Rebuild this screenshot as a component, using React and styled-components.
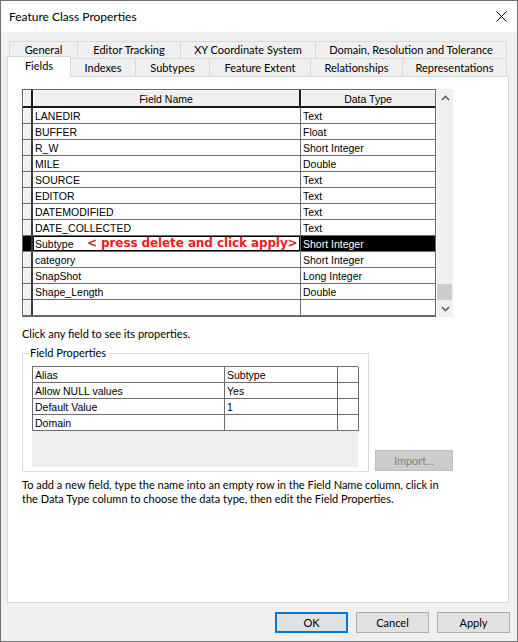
import React from "react";
import styled, { createGlobalStyle } from "styled-components";

const GlobalStyle = createGlobalStyle`
  html, body {
    margin: 0;
    padding: 0;
    background: #f0f0f0;
  }
  * {
    box-sizing: border-box;
  }
`;

const UI_FONT = `"Segoe UI", Lato, "Noto Sans", sans-serif`;
const GRID_FONT = `"Liberation Sans", Arial, sans-serif`;

const Window = styled.div`
  width: 518px;
  height: 642px;
  border: 1px solid #707070;
  background: #f0f0f0;
  display: flex;
  flex-direction: column;
  font-family: ${UI_FONT};
  font-size: 11px;
  color: #000;
`;

const TitleBar = styled.div`
  height: 31px;
  background: #fff;
  display: flex;
  align-items: center;
  justify-content: space-between;
  padding: 0 8px 1px 8px;
  font-size: 12px;
`;

const CloseButton = styled.div`
  width: 12px;
  height: 12px;
  margin-right: 2px;
  display: flex;
  align-items: center;
  justify-content: center;
`;

const Body = styled.div`
  flex: 1;
  display: flex;
  flex-direction: column;
  padding: 9px 8px 0 6px;
`;

const TabStrip = styled.div`
  margin-left: 2px;
  width: 498px;
  display: flex;
  flex-direction: column;
`;

const TabRow = styled.div`
  display: flex;
  align-items: flex-end;
  height: ${(p) => p.$h}px;
`;

const Tab = styled.div`
  flex: 0 0 ${(p) => p.$w}px;
  height: 100%;
  display: flex;
  align-items: center;
  justify-content: center;
  background: #f0f0f0;
  border-top: 1px solid #d9d9d9;
  border-left: 1px solid #d9d9d9;
  border-right: ${(p) => (p.$last ? "1px solid #d9d9d9" : "none")};
  white-space: nowrap;
  padding-bottom: 1px;
`;

const ActiveTab = styled.div`
  position: relative;
  z-index: 1;
  flex: 0 0 ${(p) => p.$w + 3}px;
  height: 21px;
  margin: -2px -1px -1px -2px;
  display: flex;
  align-items: center;
  justify-content: center;
  background: #fff;
  border: 1px solid #d9d9d9;
  border-bottom: none;
  padding-bottom: 3px;
`;

const Panel = styled.div`
  width: 502px;
  height: 527px;
  background: #fff;
  border: 1px solid #d9d9d9;
  padding: 12px 0 0 14px;
  display: flex;
  flex-direction: column;
`;

const GridRow = styled.div`
  display: flex;
  height: 228px;
`;

const DataGrid = styled.div`
  width: 414px;
  height: 228px;
  border: 1px solid #646464;
  display: grid;
  grid-template-columns: 10px 268px 134px;
  grid-auto-rows: 16px;
  grid-template-rows: 18px;
  font-family: ${GRID_FONT};
  font-size: 10.5px;
  overflow: hidden;
`;

const HeaderCell = styled.div`
  background: #f0f0f0;
  border-bottom: 2px solid #1a1a1a;
  border-right: ${(p) => (p.$last ? "none" : "2px solid #1a1a1a")};
  box-shadow: inset 1px 1px 0 #fff;
  display: flex;
  align-items: center;
  justify-content: center;
  padding-top: 1px;
`;

const SelectorCell = styled.div`
  background: ${(p) => (p.$active ? "#000" : "#f0f0f0")};
  border-right: 2px solid #3a3a3a;
  border-bottom: 1px solid #6d6d6d;
  box-shadow: ${(p) => (p.$active ? "none" : "inset 1px 1px 0 #fff")};
`;

const Cell = styled.div`
  position: relative;
  background: ${(p) => (p.$dark ? "#000" : "#fff")};
  color: ${(p) => (p.$dark ? "#fff" : "#000")};
  border-right: ${(p) => (p.$last ? "none" : "1px solid #6d6d6d")};
  border-bottom: 1px solid #6d6d6d;
  box-shadow: ${(p) => (p.$editing ? "inset 0 0 0 1px #000" : "none")};
  display: flex;
  align-items: center;
  padding-left: 2px;
  white-space: nowrap;
`;

const Annotation = styled.span`
  position: absolute;
  left: 54px;
  top: -2px;
  color: #ee1b24;
  font-family: "DejaVu Sans", Verdana, sans-serif;
  font-weight: bold;
  font-size: 12px;
  line-height: 18px;
  letter-spacing: -0.1px;
`;

const ScrollBar = styled.div`
  width: 16px;
  height: 228px;
  margin-left: 1px;
  background: #f0f0f0;
  display: flex;
  flex-direction: column;
`;

const ScrollArrow = styled.div`
  height: 17px;
  display: flex;
  align-items: center;
  justify-content: center;
`;

const ScrollTrack = styled.div`
  flex: 1;
  display: flex;
  flex-direction: column;
  justify-content: flex-end;
`;

const ScrollThumb = styled.div`
  height: 16px;
  margin: 0 1px 0 0;
  background: #cdcdcd;
`;

const Note = styled.div`
  line-height: 14px;
  margin-top: ${(p) => p.$mt}px;
  white-space: nowrap;
`;

const PropsRow = styled.div`
  display: flex;
  align-items: flex-end;
  margin-top: 5px;
`;

const GroupBox = styled.fieldset`
  width: 347px;
  margin: 0;
  border: 1px solid #dcdcdc;
  padding: 6px 0 4px 9px;
`;

const GroupLabel = styled.legend`
  padding: 0 1px;
  margin-left: -3px;
  line-height: 14px;
`;

const PropControl = styled.div`
  width: 326px;
  height: 101px;
  background: #efefef;
`;

const PropTable = styled.div`
  display: grid;
  grid-template-columns: 192px 113px 21px;
  grid-auto-rows: 16px;
  background: #fff;
  border-top: 1px solid #6d6d6d;
  border-left: 1px solid #6d6d6d;
  font-family: ${GRID_FONT};
  font-size: 10.5px;
`;

const PropCell = styled.div`
  border-right: 1px solid #6d6d6d;
  border-bottom: 1px solid #6d6d6d;
  display: flex;
  align-items: center;
  padding-left: 2px;
  white-space: nowrap;
`;

const ImportButton = styled.div`
  width: 78px;
  height: 21px;
  margin: 0 0 1px 6px;
  background: #cccccc;
  border: 1px solid #bfbfbf;
  color: #838383;
  display: flex;
  align-items: center;
  justify-content: center;
`;

const ButtonRow = styled.div`
  display: flex;
  justify-content: flex-end;
  gap: 8px;
  margin: 9px -1px 0 0;
`;

const Button = styled.div`
  width: 73px;
  height: 21px;
  background: #e1e1e1;
  border: ${(p) => (p.$default ? "2px solid #0078d7" : "1px solid #adadad")};
  display: flex;
  align-items: center;
  justify-content: center;
  padding-bottom: 1px;
`;

const Chevron = ({ up }) => (
  <svg width="9" height="6" viewBox="0 0 9 6">
    <path
      d={up ? "M1 5 L4.5 1.5 L8 5" : "M1 1 L4.5 4.5 L8 1"}
      fill="none"
      stroke="#606060"
      strokeWidth="1.6"
    />
  </svg>
);

const topTabs = [
  ["General", 68],
  ["Editor Tracking", 103],
  ["XY Coordinate System", 135],
  ["Domain, Resolution and Tolerance", 192],
];

const bottomTabs = [
  ["Fields", 61],
  ["Indexes", 65],
  ["Subtypes", 74],
  ["Feature Extent", 101],
  ["Relationships", 92],
  ["Representations", 105],
];

const fields = [
  ["LANEDIR", "Text"],
  ["BUFFER", "Float"],
  ["R_W", "Short Integer"],
  ["MILE", "Double"],
  ["SOURCE", "Text"],
  ["EDITOR", "Text"],
  ["DATEMODIFIED", "Text"],
  ["DATE_COLLECTED", "Text"],
  ["Subtype", "Short Integer"],
  ["category", "Short Integer"],
  ["SnapShot", "Long Integer"],
  ["Shape_Length", "Double"],
  ["", ""],
];

const props = [
  ["Alias", "Subtype"],
  ["Allow NULL values", "Yes"],
  ["Default Value", "1"],
  ["Domain", ""],
];

const App = () => {
  return (
    <>
      <GlobalStyle />
      <Window>
        <TitleBar>
          <span>Feature Class Properties</span>
          <CloseButton>
            <svg width="11" height="11" viewBox="0 0 11 11">
              <path d="M0.5 0.5 L10.5 10.5 M10.5 0.5 L0.5 10.5" stroke="#000" strokeWidth="1" />
            </svg>
          </CloseButton>
        </TitleBar>

        <Body>
          <TabStrip>
            <TabRow $h={17}>
              {topTabs.map(([label, w], i) => (
                <Tab key={label} $w={w} $last={i === topTabs.length - 1}>
                  {label}
                </Tab>
              ))}
            </TabRow>
            <TabRow $h={18}>
              {bottomTabs.map(([label, w], i) =>
                i === 0 ? (
                  <ActiveTab key={label} $w={w}>
                    {label}
                  </ActiveTab>
                ) : (
                  <Tab key={label} $w={w} $last={i === bottomTabs.length - 1}>
                    {label}
                  </Tab>
                )
              )}
            </TabRow>
          </TabStrip>

          <Panel>
            <GridRow>
              <DataGrid>
                <HeaderCell />
                <HeaderCell>Field Name</HeaderCell>
                <HeaderCell $last>Data Type</HeaderCell>
                {fields.map(([name, type], idx) => {
                  const active = name === "Subtype";
                  return (
                    <React.Fragment key={idx}>
                      <SelectorCell $active={active} />
                      <Cell $editing={active}>
                        {name}
                        {active && (
                          <Annotation>&lt; press delete and click apply&gt;</Annotation>
                        )}
                      </Cell>
                      <Cell $last $dark={active}>
                        {type}
                      </Cell>
                    </React.Fragment>
                  );
                })}
              </DataGrid>
              <ScrollBar>
                <ScrollArrow>
                  <Chevron up />
                </ScrollArrow>
                <ScrollTrack>
                  <ScrollThumb />
                </ScrollTrack>
                <ScrollArrow>
                  <Chevron />
                </ScrollArrow>
              </ScrollBar>
            </GridRow>

            <Note $mt={10}>Click any field to see its properties.</Note>

            <PropsRow>
              <GroupBox>
                <GroupLabel>Field Properties</GroupLabel>
                <PropControl>
                  <PropTable>
                    {props.map(([k, v]) => (
                      <React.Fragment key={k}>
                        <PropCell>{k}</PropCell>
                        <PropCell>{v}</PropCell>
                        <PropCell />
                      </React.Fragment>
                    ))}
                  </PropTable>
                </PropControl>
              </GroupBox>
              <ImportButton>Import...</ImportButton>
            </PropsRow>

            <Note $mt={6}>
              To add a new field, type the name into an empty row in the Field Name column, click in
              <br />
              the Data Type column to choose the data type, then edit the Field Properties.
            </Note>
          </Panel>

          <ButtonRow>
            <Button $default>OK</Button>
            <Button>Cancel</Button>
            <Button>Apply</Button>
          </ButtonRow>
        </Body>
      </Window>
    </>
  );
};

export default App;
